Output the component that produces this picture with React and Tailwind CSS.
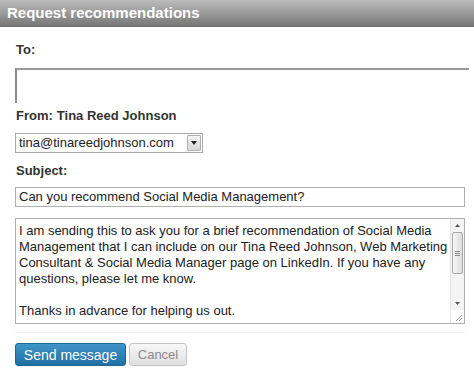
import React from 'react';

const Label = ({ children, className = '' }) => (
  <div className={`text-[13px] leading-4 font-bold text-[#333] ${className}`}>{children}</div>
);

export default function App() {
  return (
    <div className="w-[474px] h-[371px] bg-white overflow-hidden font-['Liberation_Sans',Arial,sans-serif]">
      {/* header bar */}
      <div className="h-[27px] bg-gradient-to-b from-[#bcbcbc] via-[#9a9a9a] to-[#777] border-b border-[#6e6e6e] flex items-center px-[7px]">
        <span className="text-white font-bold text-[15px]">Request recommendations</span>
      </div>

      <div className="px-[15px]">
        <Label className="mt-[15px] pl-px">To:</Label>

        {/* recipients box */}
        <div className="mt-[10px] h-[35px] w-[454px] border-t-2 border-l-2 border-t-[#9a9a9a] border-l-[#8a8a8a] bg-white" />

        <Label className="mt-[5px] pl-px">
          From:<span className="ml-[4px]">Tina Reed Johnson</span>
        </Label>

        {/* select */}
        <div className="mt-[9px] w-[188px] h-[20px] border border-[#a8a8a8] flex items-center bg-white">
          <span className="flex-1 pl-[3px] text-[13px] text-[#222] leading-4">tina@tinareedjohnson.com</span>
          <div className="w-[14px] h-[16px] mr-px border border-[#b0b0b0] rounded-[1px] bg-gradient-to-b from-[#f4f4f4] to-[#d8d8d8] flex items-center justify-center">
            <svg width="6" height="4" viewBox="0 0 6 4"><path d="M0 0h6L3 4z" fill="#222" /></svg>
          </div>
        </div>

        <Label className="mt-[10px] pl-px">Subject:</Label>

        {/* subject input */}
        <div className="mt-[8px] w-[450px] h-[20px] border border-[#b0b0b0] flex items-center pl-[3px] text-[13px] text-[#222]">
          Can you recommend Social Media Management?
        </div>

        {/* message textarea */}
        <div className="mt-[11px] w-[450px] h-[106px] border border-[#b0b0b0] flex">
          <div className="flex-1 pl-[3px] pt-[4px] text-[13px] leading-4 text-[#222] whitespace-nowrap overflow-hidden">
            <p>
              I am sending this to ask you for a brief recommendation of Social Media
              <br />
              Management that I can include on our Tina Reed Johnson, Web Marketing
              <br />
              Consultant &amp; Social Media Manager page on LinkedIn. If you have any
              <br />
              questions, please let me know.
            </p>
            <p className="mt-4">Thanks in advance for helping us out.</p>
          </div>
          <div className="w-[14px] shrink-0 flex flex-col bg-[#f4f4f4] border-l border-[#e6e6e6]">
            <div className="h-[13px] flex items-center justify-center">
              <svg width="5" height="3" viewBox="0 0 5 3"><path d="M0 3h5L2.5 0z" fill="#555" /></svg>
            </div>
            <div className="mx-px h-[42px] border border-[#a9a9a9] rounded-[2px] bg-gradient-to-r from-[#f6f6f6] to-[#dcdcdc] flex items-center justify-center">
              <div className="flex flex-col gap-px">
                <div className="w-[5px] h-px bg-[#8a8a8a]" />
                <div className="w-[5px] h-px bg-[#8a8a8a]" />
                <div className="w-[5px] h-px bg-[#8a8a8a]" />
              </div>
            </div>
            <div className="flex-1" />
            <div className="h-[13px] flex items-center justify-center">
              <svg width="5" height="3" viewBox="0 0 5 3"><path d="M0 0h5L2.5 3z" fill="#555" /></svg>
            </div>
            <div className="h-[13px] bg-white flex items-end justify-end pr-px pb-px">
              <svg width="8" height="8" viewBox="0 0 8 8">
                <path d="M7 1L1 7M7 4L4 7" stroke="#a0a0a0" strokeWidth="1" />
              </svg>
            </div>
          </div>
        </div>

        <div className="mt-[8px] h-px w-[450px] bg-[#f0f0f0]" />

        {/* buttons */}
        <div className="mt-[10px] flex gap-[3px]">
          <button className="h-[23px] w-[111px] rounded-[3px] border border-[#1d6594] bg-gradient-to-b from-[#3f95c8] to-[#1f6fa3] text-white text-[14px] leading-none">
            Send message
          </button>
          <button className="h-[23px] w-[58px] rounded-[3px] border border-[#c4c4c4] bg-gradient-to-b from-[#f7f7f7] to-[#e0e0e0] text-[#8a8a8a] text-[13px] leading-none">
            Cancel
          </button>
        </div>
      </div>
    </div>
  );
}
